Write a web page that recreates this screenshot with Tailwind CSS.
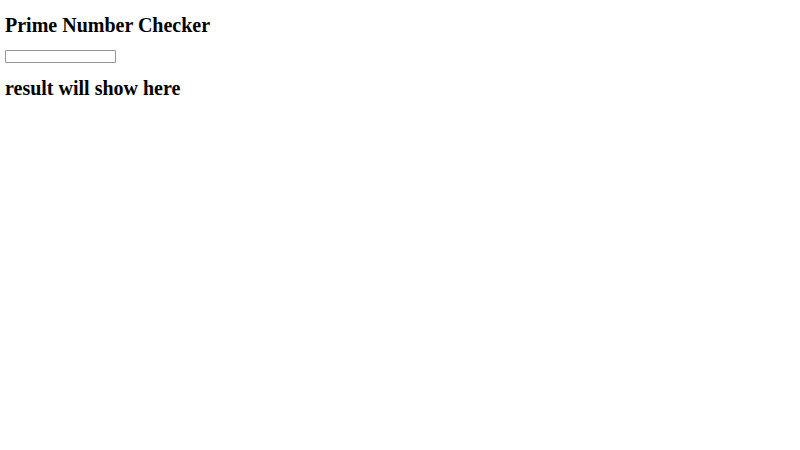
<!DOCTYPE html>
<html lang="en">
<head>
  <meta charset="UTF-8">
  <meta name="viewport" content="width=device-width, initial-scale=1.0">
  <title>Prime Number Checker</title>
  <script src="https://cdn.jsdelivr.net/npm/@tailwindcss/browser@4"></script>
</head>
<body class="bg-white text-black px-[5px] pt-[13px] font-['Liberation_Serif',serif]">
  <h1 class="text-[20px] leading-6 font-bold">Prime Number Checker</h1>
  <input type="number" id="number" aria-label="Number" class="block mt-[13px] w-[111px] h-[13px] px-px border border-[#959595] rounded-[1px] bg-white text-[9px]">
  <h1 id="result" class="mt-[13px] text-[20px] leading-6 font-bold">result will show here</h1>

  <script>
    const numberInput = document.getElementById('number');
    const result = document.getElementById('result');

    function isPrime(n) {
      if (n < 2) return false;
      for (let i = 2; i * i <= n; i++) {
        if (n % i === 0) return false;
      }
      return true;
    }

    numberInput.addEventListener('input', () => {
      if (numberInput.value === '') {
        result.textContent = 'result will show here';
        return;
      }
      const n = Number(numberInput.value);
      result.textContent = Number.isInteger(n) && isPrime(n) ? n + ' is a prime number' : n + ' is not a prime number';
    });
  </script>
</body>
</html>
